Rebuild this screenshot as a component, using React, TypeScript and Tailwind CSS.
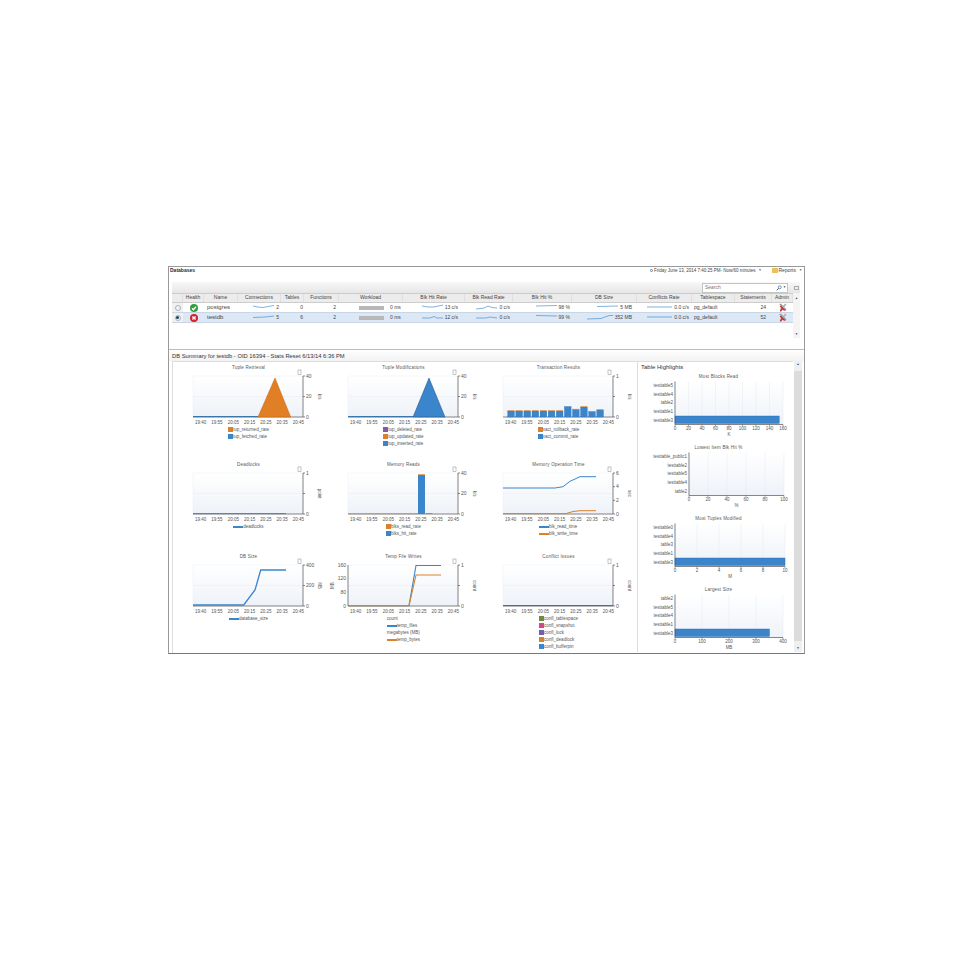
import { useId } from "react";
import type { ReactNode } from "react";

const BLUE = "#3a85cc";
const ORANGE = "#d9822b";

const columns = [
  { label: "", w: "w-[11px]" },
  { label: "Health", w: "w-[21px]" },
  { label: "Name", w: "w-[34px]" },
  { label: "Connections", w: "w-[43px]" },
  { label: "Tables", w: "w-[23px]" },
  { label: "Functions", w: "w-[35px]" },
  { label: "Workload", w: "w-[64px]" },
  { label: "Blk Hit Rate", w: "w-[62px]" },
  { label: "Blk Read Rate", w: "w-[48px]" },
  { label: "Blk Hit %", w: "w-[59px]" },
  { label: "DB Size", w: "w-[65px]" },
  { label: "Conflicts Rate", w: "w-[55px]" },
  { label: "Tablespace", w: "w-[43px]" },
  { label: "Statements", w: "w-[37px]" },
  { label: "Admin", w: "w-[21px]" },
];

function Spark({ points, w = 21 }: { points: string; w?: number }) {
  return (
    <svg width={w} height="7" viewBox={`0 0 ${w} 7`} className="shrink-0">
      <polyline points={points} fill="none" stroke="#4a90d0" strokeWidth="0.7" />
    </svg>
  );
}

function StatusIcon({ ok }: { ok: boolean }) {
  return (
    <svg width="8" height="8" viewBox="0 0 14 14">
      <circle cx="7" cy="7" r="7" fill={ok ? "#2f9e3f" : "#d1232a"} />
      {ok ? (
        <path d="M3.5 7.5 6 10l4.5-5.5" fill="none" stroke="#fff" strokeWidth="2.4" />
      ) : (
        <path d="M4.2 4.2l5.6 5.6M9.8 4.2l-5.6 5.6" fill="none" stroke="#fff" strokeWidth="2.4" />
      )}
    </svg>
  );
}

function AdminIcon() {
  return (
    <svg width="9" height="9" viewBox="0 0 16 16">
      <path d="M2 2l3-1 10 10-1 3z" fill="#9aa0a8" />
      <path d="M13 1l2 2L5 13l-2-2z" fill="#a9aeb5" />
      <path d="M3 6l8 8 2-1.5L5 4.5z" fill="#c9302c" />
      <path d="M7 9l-4 5 2 1.5 4-4.5z" fill="#c9302c" />
    </svg>
  );
}

function Radio({ on }: { on: boolean }) {
  return (
    <span className="flex h-[6px] w-[6px] items-center justify-center rounded-full border-[0.5px] border-[#aab2bb] bg-[#f2f2f2]">
      {on && <span className="h-[3.5px] w-[3.5px] rounded-full bg-[#1f3f6e]" />}
    </span>
  );
}

function Metric({ spark, value, pr, w }: { spark: string; value: string; pr: string; w?: number }) {
  return (
    <div className={`flex h-full items-center justify-end gap-[2px] ${pr}`}>
      <Spark points={spark} w={w} />
      <span className="whitespace-nowrap">{value}</span>
    </div>
  );
}

function Num({ value, pr }: { value: string; pr: string }) {
  return <div className={`flex h-full items-center justify-end ${pr}`}>{value}</div>;
}

type RowData = {
  ok: boolean;
  name: string;
  conn: string;
  connSpark: string;
  tables: string;
  fns: string;
  hit: string;
  hitSpark: string;
  read: string;
  readSpark: string;
  pct: string;
  pctSpark: string;
  size: string;
  sizeSpark: string;
  stmts: string;
};

const rows: RowData[] = [
  {
    ok: true,
    name: "postgres",
    conn: "2",
    connSpark: "0,2 5,3 10,3.5 15,2.5 21,1.5",
    tables: "0",
    fns: "2",
    hit: "13 c/s",
    hitSpark: "0,2 6,3 12,3 21,1",
    read: "0 c/s",
    readSpark: "0,5 8,4 12,2 16,3.5 21,4",
    pct: "98 %",
    pctSpark: "0,2 21,1.5",
    size: "5 MB",
    sizeSpark: "0,2.5 21,2",
    stmts: "24",
  },
  {
    ok: false,
    name: "testdb",
    conn: "5",
    connSpark: "0,3.5 12,3 21,2",
    tables: "6",
    fns: "2",
    hit: "12 c/s",
    hitSpark: "0,4 8,4 12,2.5 15,4 21,4",
    read: "0 c/s",
    readSpark: "0,4 10,4 14,3 21,4",
    pct: "99 %",
    pctSpark: "0,1.5 21,2",
    size: "352 MB",
    sizeSpark: "0,5 14,4.5 22,1.5 26,1.5",
    stmts: "52",
  },
];

function TopPane() {
  return (
    <div className="flex h-[82px] flex-col">
      <div className="flex h-[15px] items-start justify-between pl-[1px] pr-[2px] text-[5px] leading-[7px]">
        <span className="font-bold text-[#1c2c45]">Databases</span>
        <div className="flex items-center text-[4.5px] text-[#444]">
          <span className="mr-[1px] h-[3px] w-[3px] rounded-full border-[0.5px] border-[#5a7fa8]" />
          <span>Friday June 13, 2014 7:40:25 PM- Now/60 minutes</span>
          <span className="ml-[3px] text-[3px]">▼</span>
          <span className="ml-[10px] h-[5px] w-[6px] bg-[#e8c25a]" />
          <span className="ml-[1px] text-[5px]">Reports</span>
          <span className="ml-[3px] text-[3px]">▼</span>
        </div>
      </div>
      <div className="ml-[3px] flex h-[11px] w-[628px] items-center justify-end bg-gradient-to-b from-[#f8f8f8] to-[#e6e6e6] pr-[1px]">
        <div className="flex h-[10px] w-[86px] items-center justify-between border-[0.5px] border-[#c4c4c4] bg-white pl-[2px] pr-[1px] text-[5px] text-[#777]">
          <span>Search</span>
          <span className="flex items-center gap-[1px] text-[3px] text-[#333]">
            <svg width="6" height="6" viewBox="0 0 12 12">
              <circle cx="7.5" cy="4.5" r="3" fill="none" stroke="#4a7ea8" strokeWidth="1.5" />
              <path d="M5.2 6.8 1.5 10.5" stroke="#555" strokeWidth="2" />
            </svg>
            ▼
          </span>
        </div>
        <div className="ml-[6px] h-[4px] w-[5px] border-[0.5px] border-[#aaa]" />
      </div>
      <div className="ml-[3px] flex">
        <div className="w-[621px]">
          <div className="flex h-[10px] border-y-[0.5px] border-[#ccc] bg-[#ececec] text-[5px] text-[#444]">
            {columns.map((c) => (
              <div
                key={c.label}
                className={`${c.w} flex items-center justify-center whitespace-nowrap border-r-[0.5px] border-[#e0e0e0]`}
              >
                {c.label}
              </div>
            ))}
          </div>
          {rows.map((r) => (
            <div
              key={r.name}
              className={`flex h-[10px] border-b-[0.5px] border-[#c9d6e6] text-[5px] text-[#444] ${r.ok ? "bg-white" : "bg-[#dce8f6]"}`}
            >
              <div className="flex w-[11px] items-center justify-center bg-[#f0f0f0]">
                <Radio on={!r.ok} />
              </div>
              <div className="flex w-[21px] items-center justify-center">
                <StatusIcon ok={r.ok} />
              </div>
              <div className="flex w-[34px] items-center pl-[3px] text-[6px]">{r.name}</div>
              <div className="w-[43px]">
                <Metric spark={r.connSpark} value={r.conn} pr="pr-[2px]" />
              </div>
              <div className="w-[23px]">
                <Num value={r.tables} pr="pr-[1px]" />
              </div>
              <div className="w-[35px]">
                <Num value={r.fns} pr="pr-[3px]" />
              </div>
              <div className="flex w-[64px] items-center pl-[20px]">
                <span className="h-[4px] w-[25px] bg-[#b8b8b8]" />
                <span className="ml-[6px]">0 ms</span>
              </div>
              <div className="w-[62px]">
                <Metric spark={r.hitSpark} value={r.hit} pr="pr-[7px]" />
              </div>
              <div className="w-[48px]">
                <Metric spark={r.readSpark} value={r.read} pr="pr-[3px]" />
              </div>
              <div className="w-[59px]">
                <Metric spark={r.pctSpark} value={r.pct} pr="pr-[2px]" w={21} />
              </div>
              <div className="w-[65px]">
                <Metric spark={r.sizeSpark} value={r.size} pr="pr-[5px]" w={r.ok ? 21 : 26} />
              </div>
              <div className="w-[55px]">
                <Metric spark="0,3 25,3" value="0.0 c/s" pr="pr-[3px]" w={25} />
              </div>
              <div className="flex w-[43px] items-center pl-[2px]">pg_default</div>
              <div className="w-[37px]">
                <Num value={r.stmts} pr="pr-[6px]" />
              </div>
              <div className="flex w-[21px] items-center justify-center">
                <AdminIcon />
              </div>
            </div>
          ))}
        </div>
        <div className="flex h-[45px] w-[7px] flex-col items-center justify-between bg-[#f4f4f4] text-[3px] text-[#333]">
          <span className="mt-[3px]">▲</span>
          <span className="mb-[2px]">▼</span>
        </div>
      </div>
    </div>
  );
}

const TIME_LABELS = ["19:40", "19:55", "20:05", "20:15", "20:25", "20:35", "20:45"];

type Tick = { y: number; label: string };

function TimeChart({
  ticks,
  unit,
  left,
  leftUnit,
  children,
}: {
  ticks: Tick[];
  unit: string;
  left?: Tick[];
  leftUnit?: string;
  children: ReactNode;
}) {
  const id = useId().replace(/[^a-zA-Z0-9]/g, "");
  return (
    <svg width="151" height="55" viewBox="0 0 151 55" className="overflow-visible">
      <defs>
        <linearGradient id={id} x1="0" y1="0" x2="0" y2="1">
          <stop offset="0" stopColor="#ffffff" />
          <stop offset="1" stopColor="#eef2f8" />
        </linearGradient>
      </defs>
      <g transform="translate(20 5)" fontSize="5" fill="#555">
        <rect x="0" y="0" width="110" height="41" fill={`url(#${id})`} stroke="#eceff4" strokeWidth="0.5" />
        <line x1="0" y1="20.5" x2="110" y2="20.5" stroke="#e6eaf2" strokeWidth="0.5" />
        <line x1="0" y1="41" x2="110" y2="41" stroke="#555" strokeWidth="0.7" />
        <line x1="110" y1="0" x2="110" y2="41" stroke="#555" strokeWidth="0.7" />
        {children}
        {ticks.map((t) => (
          <g key={t.y}>
            <line x1="110" y1={t.y} x2="112" y2={t.y} stroke="#555" strokeWidth="0.7" />
            <text x="113" y={t.y + 1.7}>
              {t.label}
            </text>
          </g>
        ))}
        <text transform="translate(125 20.5) rotate(90)" textAnchor="middle" fontSize="4.5">
          {unit}
        </text>
        {left && (
          <>
            <line x1="0" y1="0" x2="0" y2="41" stroke="#555" strokeWidth="0.7" />
            {left.map((t) => (
              <text key={t.label} x="-2" y={t.y + 1.7} textAnchor="end">
                {t.label}
              </text>
            ))}
            <text transform="translate(-14 20.5) rotate(-90)" textAnchor="middle" fontSize="4.5">
              {leftUnit}
            </text>
          </>
        )}
        {TIME_LABELS.map((l, i) => (
          <text key={l} x={7.7 + i * 16.3} y="48" textAnchor="middle" fontSize="4.5">
            {l}
          </text>
        ))}
        <rect x="105" y="-6" width="3" height="4.5" fill="#fff" stroke="#888" strokeWidth="0.5" />
      </g>
    </svg>
  );
}

function Line({ points, color = BLUE, width = 1 }: { points: string; color?: string; width?: number }) {
  return <polyline points={points} fill="none" stroke={color} strokeWidth={width} />;
}

function Swatch({ color, label }: { color: string; label: string }) {
  return (
    <div className="flex h-[7px] items-center">
      <span className="h-[5px] w-[5px]" style={{ backgroundColor: color }} />
      <span className="whitespace-nowrap">{label}</span>
    </div>
  );
}

function LineKey({ color, label }: { color: string; label: string }) {
  return (
    <div className="flex h-[7px] items-center">
      <span className="h-[2px] w-[10px]" style={{ backgroundColor: color }} />
      <span className="whitespace-nowrap">{label}</span>
    </div>
  );
}

function Cell({ title, chart, legend }: { title: string; chart: ReactNode; legend: ReactNode }) {
  return (
    <div className="flex flex-col items-center pr-[4px] pt-[2px]">
      <div className="h-[7px] text-[4.5px] leading-[7px] tracking-[0.2px] text-[#555]">{title}</div>
      {chart}
      <div className="flex flex-col items-start text-[4.5px] leading-[7px] text-[#555]">{legend}</div>
    </div>
  );
}

const bars = [6, 6, 6, 6, 6, 6, 6, 10.5, 7.5, 10, 5.5, 7];

function ChartGrid() {
  return (
    <div className="grid w-[465px] grid-cols-[repeat(3,155px)] grid-rows-[97px_92px_102px] border-l border-t border-[#ddd]">
      <Cell
        title="Tuple Retrieval"
        chart={
          <TimeChart ticks={[{ y: 0, label: "40" }, { y: 20.5, label: "20" }, { y: 41, label: "0" }]} unit="k/s">
            <polygon points="65,41 82,2 97.7,41" fill="#e07f24" stroke="#c8650e" strokeWidth="0.5" />
            <Line points="0,40.6 65,40.6" color="#2f6fa8" />
          </TimeChart>
        }
        legend={
          <>
            <Swatch color={ORANGE} label="tup_returned_rate" />
            <Swatch color={BLUE} label="tup_fetched_rate" />
          </>
        }
      />
      <Cell
        title="Tuple Modifications"
        chart={
          <TimeChart ticks={[{ y: 0, label: "40" }, { y: 20.5, label: "20" }, { y: 41, label: "0" }]} unit="k/s">
            <polygon points="65,41 81,2 97,41" fill="#3a85cc" stroke="#1f4f80" strokeWidth="0.5" />
            <Line points="0,40.6 65,40.6" color="#2f6fa8" />
          </TimeChart>
        }
        legend={
          <>
            <Swatch color="#7b5ea8" label="tup_deleted_rate" />
            <Swatch color={ORANGE} label="tup_updated_rate" />
            <Swatch color={BLUE} label="tup_inserted_rate" />
          </>
        }
      />
      <Cell
        title="Transaction Results"
        chart={
          <TimeChart ticks={[{ y: 0, label: "1" }, { y: 20.5, label: "" }, { y: 41, label: "0" }]} unit="k/s">
            {bars.map((h, i) => (
              <g key={i}>
                <rect x={4.7 + i * 8.1} y={41 - h} width="6.7" height={h} fill={BLUE} stroke="#2a6aa5" strokeWidth="0.3" />
                {i !== 7 && i !== 10 && <rect x={4.7 + i * 8.1} y={40.4 - h} width="6.7" height="0.7" fill={ORANGE} />}
              </g>
            ))}
          </TimeChart>
        }
        legend={
          <>
            <Swatch color={ORANGE} label="xact_rollback_rate" />
            <Swatch color={BLUE} label="xact_commit_rate" />
          </>
        }
      />
      <Cell
        title="Deadlocks"
        chart={
          <TimeChart ticks={[{ y: 0, label: "1" }, { y: 20.5, label: "" }, { y: 41, label: "0" }]} unit="point">
            <Line points="0,40.6 93,40.6" />
          </TimeChart>
        }
        legend={<LineKey color={BLUE} label="deadlocks" />}
      />
      <Cell
        title="Memory Reads"
        chart={
          <TimeChart ticks={[{ y: 0, label: "40" }, { y: 20.5, label: "20" }, { y: 41, label: "0" }]} unit="k/s">
            <rect x="70" y="2" width="7" height="39" fill={BLUE} />
            <rect x="70" y="1.3" width="7" height="0.8" fill={ORANGE} />
            <rect x="78" y="40" width="6.5" height="1" fill={ORANGE} />
            <Line points="0,40.6 70,40.6" color={ORANGE} width="0.6" />
          </TimeChart>
        }
        legend={
          <>
            <Swatch color={ORANGE} label="blks_read_rate" />
            <Swatch color={BLUE} label="blks_hit_rate" />
          </>
        }
      />
      <Cell
        title="Memory Operation Time"
        chart={
          <TimeChart
            ticks={[{ y: 0, label: "6" }, { y: 13.7, label: "4" }, { y: 27.3, label: "2" }, { y: 41, label: "0" }]}
            unit="sec"
          >
            <Line points="0,15 52,15 60,13.7 67,8.3 77,3.7 93,3.7" />
            <Line points="0,40.6 63,40.6 70,38.5 77,37.7 93,37.7" color={ORANGE} />
          </TimeChart>
        }
        legend={
          <>
            <LineKey color={BLUE} label="blk_read_time" />
            <LineKey color={ORANGE} label="blk_write_time" />
          </>
        }
      />
      <Cell
        title="DB Size"
        chart={
          <TimeChart ticks={[{ y: 0, label: "400" }, { y: 20.5, label: "200" }, { y: 41, label: "0" }]} unit="MB">
            <Line points="0,40 50.7,40 62,25 64,18 67.7,5 93,5" width="1.3" />
          </TimeChart>
        }
        legend={<LineKey color={BLUE} label="database_size" />}
      />
      <Cell
        title="Temp File Writes"
        chart={
          <TimeChart
            ticks={[{ y: 0, label: "1" }, { y: 20.5, label: "" }, { y: 41, label: "0" }]}
            unit="count"
            left={[{ y: 0, label: "160" }, { y: 13.7, label: "120" }, { y: 27.3, label: "80" }, { y: 41, label: "0" }]}
            leftUnit="MB"
          >
            <Line points="0,40.6 61,40.6 68,0.5 93,0.5" width="1.1" />
            <Line points="0,40.6 61,40.6 68,10 93,10" color={ORANGE} width="1.1" />
          </TimeChart>
        }
        legend={
          <>
            <div className="h-[7px]">count</div>
            <LineKey color={BLUE} label="temp_files" />
            <div className="h-[7px]">megabytes (MB)</div>
            <LineKey color={ORANGE} label="temp_bytes" />
          </>
        }
      />
      <Cell
        title="Conflict Issues"
        chart={
          <TimeChart ticks={[{ y: 0, label: "1" }, { y: 20.5, label: "" }, { y: 41, label: "0" }]} unit="count">
            <Line points="0,40.6 110,40.6" color="#2f6fa8" />
          </TimeChart>
        }
        legend={
          <>
            <Swatch color="#6f8a3a" label="confl_tablespace" />
            <Swatch color="#d6478a" label="confl_snapshot" />
            <Swatch color="#7b5ea8" label="confl_lock" />
            <Swatch color={ORANGE} label="confl_deadlock" />
            <Swatch color={BLUE} label="confl_bufferpin" />
          </>
        }
      />
    </div>
  );
}

function HBar({
  title,
  names,
  xLabels,
  unit,
  value,
  plotX = 37,
  plotW = 108,
}: {
  title: string;
  names: string[];
  xLabels: string[];
  unit: string;
  value: number;
  plotX?: number;
  plotW?: number;
}) {
  const id = useId().replace(/[^a-zA-Z0-9]/g, "");
  const n = xLabels.length - 1;
  return (
    <div className="h-[71px] shrink-0 pl-[6px]">
      <div className="h-[7px] text-center text-[4.5px] leading-[7px] tracking-[0.2px] text-[#555]">{title}</div>
      <svg width="155" height="64" viewBox="0 0 155 64" className="-ml-[6px]">
        <defs>
          <linearGradient id={id} x1="0" y1="0" x2="0" y2="1">
            <stop offset="0" stopColor="#ffffff" />
            <stop offset="1" stopColor="#eef2f8" />
          </linearGradient>
        </defs>
        <g fontSize="4.5" fill="#555">
          <rect x={plotX} y="1.5" width={plotW} height="43" fill={`url(#${id})`} />
          {xLabels.map((l, i) => {
            const x = plotX + (plotW * i) / n;
            return (
              <g key={l}>
                <line x1={x} y1="1.5" x2={x} y2="44.5" stroke="#e6eaf2" strokeWidth="0.5" />
                <line x1={x} y1="44.5" x2={x} y2="46.5" stroke="#555" strokeWidth="0.5" />
                <text x={x} y="50" textAnchor="middle">
                  {l}
                </text>
              </g>
            );
          })}
          {value > 0 && (
            <rect x={plotX} y="36" width={plotW * value} height="7.5" fill={BLUE} stroke="#2a6aa5" strokeWidth="0.4" />
          )}
          <line x1={plotX} y1="1.5" x2={plotX} y2="44.5" stroke="#555" strokeWidth="0.7" />
          <line x1={plotX} y1="44.5" x2={plotX + plotW} y2="44.5" stroke="#555" strokeWidth="0.7" />
          {names.map((name, i) => (
            <text key={name} x={plotX - 2} y={7.2 + i * 8.6} textAnchor="end">
              {name}
            </text>
          ))}
          <text x={plotX + plotW / 2} y="56" textAnchor="middle">
            {unit}
          </text>
        </g>
      </svg>
    </div>
  );
}

function Highlights() {
  return (
    <div className="flex h-[291px] w-[156px] flex-col overflow-hidden border-l border-t border-[#ddd]">
      <div className="h-[11px] shrink-0 pl-[3px] text-[6px] leading-[11px] text-[#333]">Table Highlights</div>
      <HBar
        title="Most Blocks Read"
        names={["testtable5", "testtable4", "table2", "testtable1", "testtable3"]}
        xLabels={["0", "20", "40", "60", "80", "100", "120", "140", "160"]}
        unit="K"
        value={0.965}
      />
      <HBar
        title="Lowest Item Blk Hit %"
        names={["testtable_public1", "testtable2", "testtable5", "testtable4", "table2"]}
        xLabels={["0", "20", "40", "60", "80", "100"]}
        unit="%"
        value={0}
        plotX={51}
        plotW={95}
      />
      <HBar
        title="Most Tuples Modified"
        names={["testtable0", "testtable4", "table3", "testtable1", "testtable3"]}
        xLabels={["0", "2", "4", "6", "8", "10"]}
        unit="M"
        value={1}
        plotW={110}
      />
      <HBar
        title="Largest Size"
        names={["table2", "testtable5", "testtable4", "testtable1", "testtable3"]}
        xLabels={["0", "100", "200", "300", "400"]}
        unit="MB"
        value={0.875}
      />
    </div>
  );
}

function BottomPane() {
  return (
    <div className="flex flex-col">
      <div className="flex h-[12px] items-center border-t border-[#bbb] bg-gradient-to-b from-white to-[#f2f2f2] pl-[3px] pt-[1px] text-[5.8px] text-[#333]">
        DB Summary for testdb - OID 16394 - Stats Reset 6/13/14 6:36 PM
      </div>
      <div className="flex pl-[3px]">
        <ChartGrid />
        <Highlights />
        <div className="ml-[1px] flex h-[291px] w-[8px] flex-col items-center justify-between bg-[#efefef] text-[3px] text-[#333]">
          <span className="mt-[1px]">▲</span>
          <div className="h-[270px] w-full bg-[#dcdcdc]" />
          <span className="mb-[2px]">▼</span>
        </div>
      </div>
    </div>
  );
}

export default function App() {
  return (
    <div className="h-[973px] w-[973px] bg-white pl-[168px] pt-[266px] font-['Liberation_Sans',sans-serif]">
      <div className="h-[388px] w-[637px] overflow-hidden border border-[#999] border-b-[#777]">
        <TopPane />
        <BottomPane />
      </div>
    </div>
  );
}
